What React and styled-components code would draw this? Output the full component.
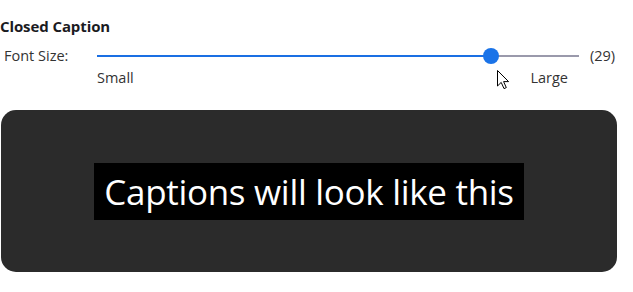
import styled, { createGlobalStyle } from "styled-components";

const Global = createGlobalStyle`
  html, body {
    margin: 0;
    background: #ffffff;
    font-family: "Open Sans", "Noto Sans", sans-serif;
  }
`;

const Page = styled.div`
  position: relative;
  width: 633px;
  height: 292px;
  padding-top: 16px;
  box-sizing: border-box;
`;

const Title = styled.div`
  font-size: 15px;
  font-weight: 700;
  line-height: 20px;
  color: #1b1b1f;
  letter-spacing: -0.1px;
`;

const SliderRow = styled.div`
  display: grid;
  grid-template-columns: 86px 482px auto;
  column-gap: 11px;
  margin-top: 10px;
  color: #333;
  font-size: 14.5px;
`;

const Label = styled.div`
  padding-left: 4px;
  line-height: 20px;
`;

const Track = styled.div`
  position: relative;
  height: 20px;
`;

const Rail = styled.div`
  position: absolute;
  left: 0;
  right: 0;
  top: 9px;
  height: 2px;
  background: #9a99ab;
`;

const Fill = styled.div`
  position: absolute;
  left: 0;
  top: 9px;
  height: 2px;
  background: #1a6fe3;
`;

const Thumb = styled.div`
  position: absolute;
  top: 2px;
  width: 16px;
  height: 16px;
  margin-left: -8px;
  border-radius: 50%;
  background: #1a73e8;
`;

const Value = styled.div`
  line-height: 20px;
`;

const Ends = styled.div`
  grid-column: 2;
  display: flex;
  justify-content: space-between;
  padding-right: 11px;
  margin-top: 2px;
  line-height: 20px;
`;

const Preview = styled.div`
  margin: 22px 0 0 1px;
  width: 616px;
  height: 162px;
  border-radius: 15px;
  background: #2b2b2b;
  display: flex;
  align-items: center;
  justify-content: center;
`;

const Caption = styled.div`
  background: #000;
  color: #fff;
  font-size: 35px;
  line-height: 57px;
  height: 57px;
  padding: 0 10px;
  letter-spacing: -0.3px;
  white-space: nowrap;
`;

const Cursor = styled.svg`
  position: absolute;
  left: 497px;
  top: 70px;
`;

const fraction = 0.818;

export default function App() {
  return (
    <Page>
      <Global />
      <Title>Closed Caption</Title>
      <SliderRow>
        <Label>Font Size:</Label>
        <Track>
          <Rail />
          <Fill style={{ width: `${fraction * 100}%` }} />
          <Thumb style={{ left: `${fraction * 100}%` }} />
        </Track>
        <Value>(29)</Value>
        <Ends>
          <span>Small</span>
          <span>Large</span>
        </Ends>
      </SliderRow>
      <Preview>
        <Caption>Captions will look like this</Caption>
      </Preview>
      <Cursor width="14" height="20" viewBox="0 0 14 20">
        <path
          d="M0.5 0.5 L0.5 16 L4.2 12.4 L7 18.6 L9.3 17.6 L6.6 11.6 L11.6 11.6 Z"
          fill="#fff"
          stroke="#000"
          strokeWidth="1"
          strokeLinejoin="miter"
        />
      </Cursor>
    </Page>
  );
}
